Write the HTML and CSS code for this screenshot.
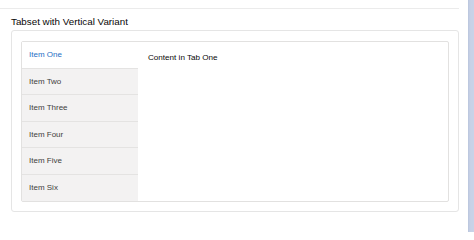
FILE: index.html
```html
<!DOCTYPE html>
<html lang="en">
<head>
<meta charset="utf-8">
<title>Tabset with Vertical Variant</title>
<link rel="stylesheet" href="styles.css">
</head>
<body>
<div class="page">
  <main class="main">
    <div class="rule"></div>
    <h2 class="title">Tabset with Vertical Variant</h2>
    <section class="card">
      <div class="tabset">
        <ul class="tabs">
          <li class="tab active">Item One</li>
          <li class="tab">Item Two</li>
          <li class="tab">Item Three</li>
          <li class="tab">Item Four</li>
          <li class="tab">Item Five</li>
          <li class="tab">Item Six</li>
        </ul>
        <div class="panel">Content in Tab One</div>
      </div>
    </section>
  </main>
  <div class="strip"></div>
</div>
</body>
</html>
```
FILE: styles.css
```css
* { box-sizing: border-box; }
html, body { margin: 0; padding: 0; background: #ffffff; }
body {
  font-family: "Liberation Sans", Arial, sans-serif;
  color: #080707;
}
.page {
  display: flex;
  width: 474px;
  height: 232px;
  overflow: hidden;
}
.main {
  width: 468px;
  padding-right: 9px;
}
.rule {
  height: 9px;
  border-bottom: 1px solid #ebebeb;
}
.title {
  margin: 0;
  padding: 6px 0 0 11px;
  height: 21px;
  font-size: 9.8px;
  font-weight: normal;
  line-height: 14px;
  color: #080707;
}
.card {
  margin-left: 11px;
  height: 182px;
  border: 1px solid #e5e5e5;
  border-radius: 3px;
  padding: 10px 9px 9px 9px;
}
.tabset {
  display: flex;
  height: 161px;
  border: 1px solid #e2e1e0;
  border-radius: 2px;
}
.tabs {
  list-style: none;
  margin: 0;
  padding: 0;
  width: 116px;
  background: #f3f2f2;
  display: flex;
  flex-direction: column;
}
.tab {
  height: 26.5px;
  padding-left: 7px;
  display: flex;
  align-items: center;
  font-size: 8px;
  color: #3e3e3c;
  border-bottom: 1px solid #e4e3e2;
}
.tab:last-child { border-bottom: none; }
.tab.active {
  background: #ffffff;
  color: #1f6fc5;
}
.panel {
  flex: 1;
  padding: 10px 10px;
  font-size: 8.1px;
  line-height: 12px;
  color: #080707;
}
.strip {
  width: 6px;
  background: linear-gradient(to right, #b9c5dd 0px, #c7d1e6 2px, #c9d3e8 6px);
}
```
